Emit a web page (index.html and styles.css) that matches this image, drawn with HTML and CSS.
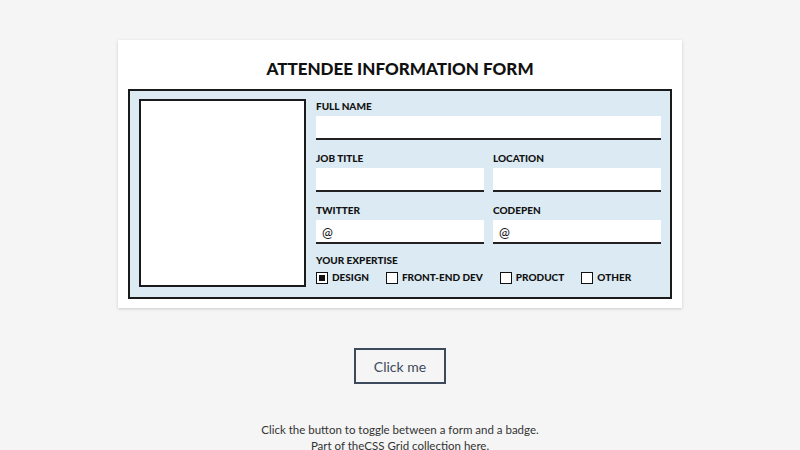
FILE: index.html
```html
<!DOCTYPE html>
<html>
<head>
<meta charset="utf-8">
<link rel="stylesheet" href="styles.css">
</head>
<body>
<main class="page">
  <section class="card">
    <h1 class="title">ATTENDEE INFORMATION FORM</h1>
    <div class="panel">
      <div class="photo"></div>
      <div class="fields">
        <div class="group">
          <label class="label">FULL NAME</label>
          <div class="input"></div>
        </div>
        <div class="row">
          <div class="group">
            <label class="label">JOB TITLE</label>
            <div class="input"></div>
          </div>
          <div class="group">
            <label class="label">LOCATION</label>
            <div class="input"></div>
          </div>
        </div>
        <div class="row">
          <div class="group">
            <label class="label">TWITTER</label>
            <div class="input">@</div>
          </div>
          <div class="group">
            <label class="label">CODEPEN</label>
            <div class="input">@</div>
          </div>
        </div>
        <div class="group expertise">
          <label class="label">YOUR EXPERTISE</label>
          <div class="checks">
            <span class="check"><span class="box checked"></span>DESIGN</span>
            <span class="check"><span class="box"></span>FRONT-END DEV</span>
            <span class="check"><span class="box"></span>PRODUCT</span>
            <span class="check"><span class="box"></span>OTHER</span>
          </div>
        </div>
      </div>
    </div>
  </section>
  <button class="btn">Click me</button>
  <p class="note">Click the button to toggle between a form and a badge.<br>Part of theCSS Grid collection here.</p>
</main>
</body>
</html>
```
FILE: styles.css
```css
html, body {
  margin: 0;
  padding: 0;
  background: #f5f5f5;
  font-family: "Lato", "Open Sans", sans-serif;
  color: #111;
}
.page {
  display: flex;
  flex-direction: column;
  align-items: center;
  padding-top: 40px;
}
.card {
  width: 564px;
  box-sizing: border-box;
  background: #fff;
  box-shadow: 0 1px 3px rgba(0,0,0,0.18);
  padding: 19px 10px 9px;
}
.title {
  margin: 0 0 10px;
  text-align: center;
  font-size: 17px;
  font-weight: 900;
  line-height: 20px;
  letter-spacing: 0;
}
.panel {
  background: #dbeaf3;
  border: 2px solid #1a1a1a;
  padding: 8px 9px 10px;
  display: grid;
  grid-template-columns: 167px 1fr;
  column-gap: 10px;
}
.photo {
  background: #fff;
  border: 2px solid #1a1a1a;
  height: 184px;
}
.fields {
  display: flex;
  flex-direction: column;
  gap: 11px;
}
.row {
  display: grid;
  grid-template-columns: 1fr 1fr;
  column-gap: 9px;
}
.label {
  display: block;
  font-size: 10px;
  font-weight: 900;
  height: 17px;
  line-height: 15px;
}
.input {
  height: 22px;
  background: #fff;
  border-bottom: 2px solid #222;
  font-size: 13px;
  line-height: 24px;
  padding-left: 6px;
}
.expertise { margin-top: -2px; }
.expertise .label { height: 18px; }
.checks {
  display: flex;
  font-size: 10px;
  font-weight: 900;
  line-height: 13px;
}
.check {
  display: flex;
  align-items: center;
  margin-right: 17px;
}
.box {
  width: 10px;
  height: 10px;
  border: 1.5px solid #111;
  margin-right: 4px;
  background: #fff;
  position: relative;
}
.box.checked::after {
  content: "";
  position: absolute;
  left: 2px; top: 2px; right: 2px; bottom: 2px;
  background: #111;
}
.btn {
  margin-top: 40px;
  width: 92px;
  height: 36px;
  background: transparent;
  border: 2px solid #3d4a5c;
  font-family: "Lato", "Open Sans", sans-serif;
  font-size: 14px;
  color: #3d4a5c;
  cursor: pointer;
}
.note {
  margin: 38px 0 0;
  text-align: center;
  font-size: 11.5px;
  line-height: 16px;
  color: #333;
}
```
